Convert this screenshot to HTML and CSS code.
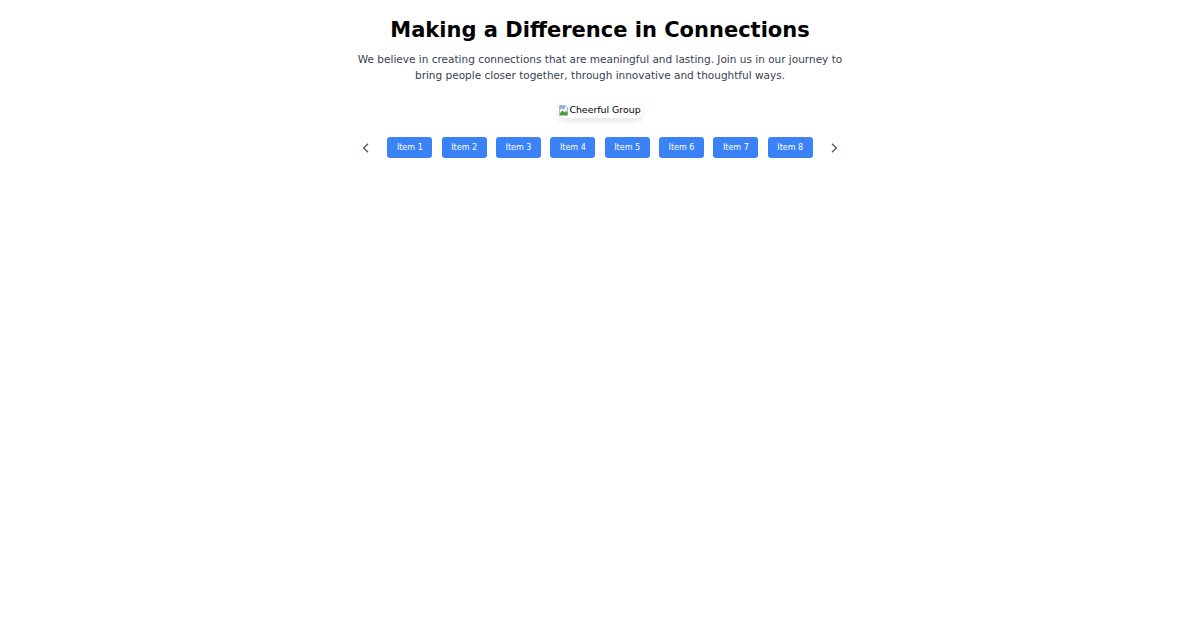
FILE: index.html
```html
<!DOCTYPE html>
<html lang="en">
<head>
<meta charset="utf-8">
<title>Making a Difference in Connections</title>
<link rel="stylesheet" href="styles.css">
</head>
<body>
<main class="hero">
  <h1 class="hero-title">Making a Difference in Connections</h1>
  <p class="hero-text">We believe in creating connections that are meaningful and lasting. Join us in our journey to bring people closer together, through innovative and thoughtful ways.</p>
  <div class="photo">
    <svg class="photo-icon" width="9" height="11" viewBox="0 0 9 11" aria-hidden="true">
      <path d="M0.5 0.5h6l2 2v8h-8z" fill="#eef2f5" stroke="#a0a8b0" stroke-width="0.8"/>
      <path d="M1 1h5v3H1z" fill="#8cb8e0"/>
      <path d="M1 8l2.5-2.5 2 2 1.5-1.5 1.5 1.5V10H1z" fill="#4f9a3c"/>
    </svg>
    <span class="photo-alt">Cheerful Group</span>
  </div>
  <nav class="carousel">
    <button class="nav-btn" aria-label="Previous">
      <svg width="10" height="10" viewBox="0 0 10 10"><path d="M7 0.8L2.6 5 7 9.2" fill="none" stroke="#4b5563" stroke-width="1.3"/></svg>
    </button>
    <div class="items">
      <span class="item">Item 1</span>
      <span class="item">Item 2</span>
      <span class="item">Item 3</span>
      <span class="item">Item 4</span>
      <span class="item">Item 5</span>
      <span class="item">Item 6</span>
      <span class="item">Item 7</span>
      <span class="item">Item 8</span>
    </div>
    <button class="nav-btn" aria-label="Next">
      <svg width="10" height="10" viewBox="0 0 10 10"><path d="M3 0.8L7.4 5 3 9.2" fill="none" stroke="#4b5563" stroke-width="1.3"/></svg>
    </button>
  </nav>
</main>
</body>
</html>
```
FILE: styles.css
```css
html, body {
  margin: 0;
  padding: 0;
  background: #ffffff;
}

body {
  font-family: "DejaVu Sans", sans-serif;
  color: #000;
}

.hero {
  width: 500px;
  margin: 0 auto;
  padding-top: 16px;
  display: flex;
  flex-direction: column;
  align-items: center;
}

.hero-title {
  margin: 0;
  font-size: 21px;
  line-height: 28px;
  font-weight: 700;
  text-align: center;
}

.hero-text {
  margin: 7px 0 0;
  font-size: 10.5px;
  line-height: 16px;
  color: #374151;
  text-align: center;
}

.photo {
  margin-top: 19px;
  display: flex;
  align-items: center;
  gap: 1px;
  padding: 0 1px;
  border-radius: 6px;
  box-shadow: 0 3px 6px rgba(0, 0, 0, 0.1);
  font-size: 9.4px;
  line-height: 16px;
}

.photo-icon {
  display: block;
}

.carousel {
  margin-top: 19px;
  display: flex;
  align-items: center;
  gap: 16px;
}

.nav-btn {
  border: 0;
  background: none;
  padding: 0;
  width: 10px;
  height: 10px;
  display: flex;
}

.items {
  display: flex;
  gap: 9.5px;
}

.item {
  background: #3b82f6;
  color: #fff;
  font-size: 8px;
  line-height: 20px;
  padding: 1px 9.5px 0;
  border-radius: 3px;
}
```
